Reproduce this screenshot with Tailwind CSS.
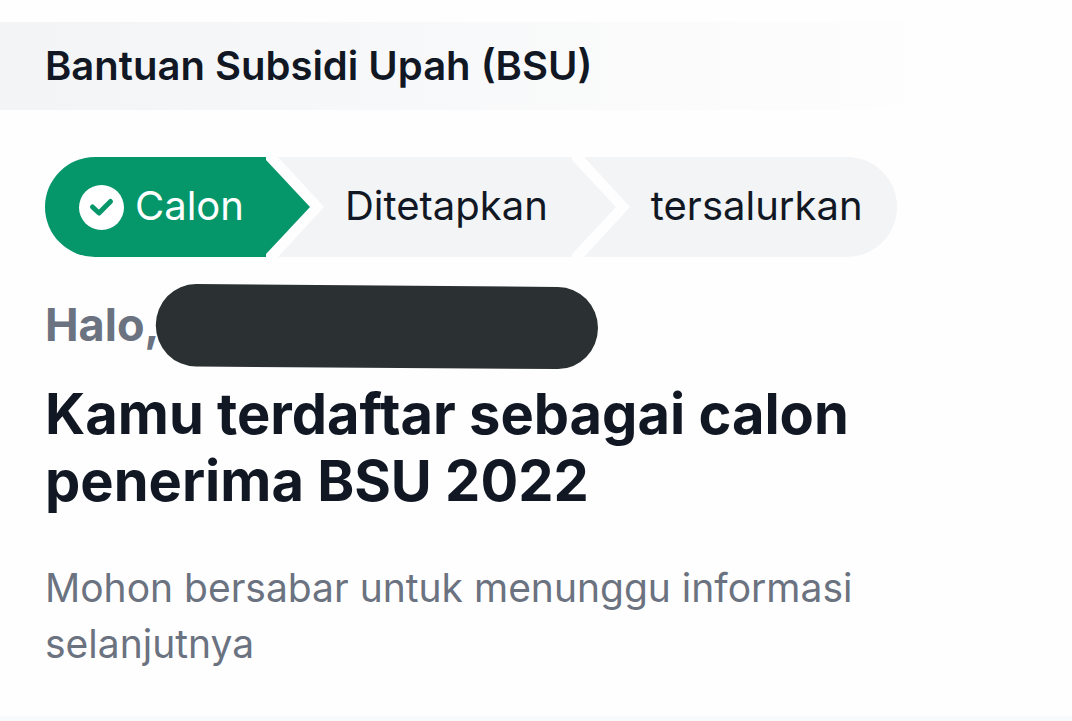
<!DOCTYPE html>
<html lang="id">
<head>
    <meta charset="UTF-8">
    <meta name="viewport" content="width=device-width, initial-scale=1.0">
    <title>Bantuan Subsidi Upah (BSU)</title>
    <script src="https://cdn.jsdelivr.net/npm/@tailwindcss/browser@4"></script>
</head>
<body class="bg-[#fefefe] text-[#111824] font-['Inter',sans-serif]">
    <header class="mt-[22px] px-[45px] py-4 bg-linear-to-r from-[#f3f4f6] to-[#fefefe] to-90%">
        <h1 class="text-[40px] leading-14 font-semibold">Bantuan Subsidi Upah (BSU)</h1>
    </header>

    <main class="px-[45px] pt-[47px] pb-11">
        <ol class="flex w-fit h-[100px] rounded-full overflow-hidden bg-[#f3f4f6] text-[40px] leading-14">
            <li class="relative flex items-center gap-[11px] pl-[34px] pr-[22px] bg-[#059669] text-white">
                <svg class="size-[45px]" viewBox="0 0 45 45" fill="none">
                    <circle cx="22.5" cy="22.5" r="22.5" fill="#fff"/>
                    <path d="M13.500 22L20 28L31.500 16.500" stroke="#059669" stroke-width="5" stroke-linecap="round" stroke-linejoin="round"/>
                </svg>
                <span class="pb-0.5">Calon</span>
                <svg class="absolute left-full top-0 w-[60px] h-[100px]" viewBox="0 0 60 100">
                    <path d="M0 0H12L58 50L12 100H0Z" fill="#fefefe"/>
                    <path d="M0 3L44 50L0 97Z" fill="#059669"/>
                </svg>
            </li>
            <li class="relative flex items-center pl-[79px] pr-6">
                <span class="pb-0.5">Ditetapkan</span>
                <svg class="absolute left-full top-0 w-[60px] h-[100px]" viewBox="0 0 60 100">
                    <path d="M0 0H12L58 50L12 100H0Z" fill="#fefefe"/>
                    <path d="M0 3L44 50L0 97Z" fill="#f3f4f6"/>
                </svg>
            </li>
            <li class="flex items-center pl-[79px] pr-[34px]">
                <span class="pb-0.5">tersalurkan</span>
            </li>
        </ol>

        <!-- greeting, name is hidden -->
        <div class="flex items-center mt-[27px]">
            <p class="pb-1 text-[45px] leading-14 font-bold text-[#6b7280]">Halo,</p>
            <svg class="-ml-[5px] w-[444px] h-[86px]" viewBox="0 0 444 86">
                <path d="M41 0L403 3A40 41 0 0 1 403 85L41 82.500A40 41 0 0 1 41 0Z" fill="#2b3033"/>
            </svg>
        </div>

        <h2 class="mt-[11px] max-w-[900px] text-[56px] leading-[67px] font-bold">Kamu terdaftar sebagai calon penerima BSU 2022</h2>
        <p class="mt-[45px] max-w-[900px] text-[39px] leading-14 text-[#6b7280]">Mohon bersabar untuk menunggu informasi selanjutnya</p>
    </main>

    <footer class="h-[5px] bg-[#f9fafb]"></footer>
</body>
</html>
